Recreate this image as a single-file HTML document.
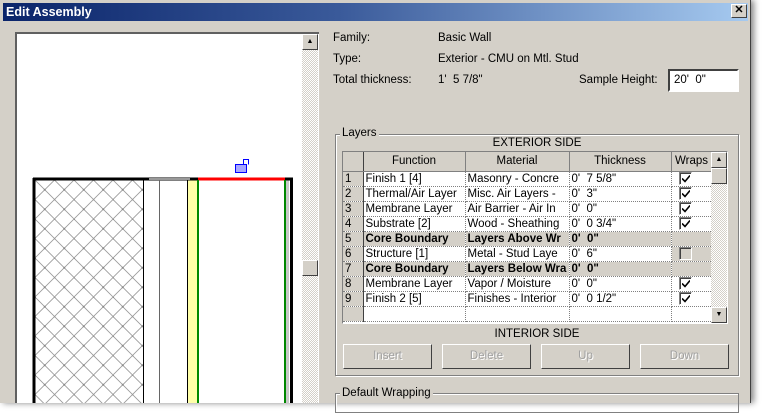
<!DOCTYPE html>
<html><head><style>
*{margin:0;padding:0;box-sizing:border-box}
body{width:768px;height:403px;overflow:hidden;background:#fff;font-family:"Liberation Sans",sans-serif;font-size:11.5px;color:#000;position:relative}
.abs{position:absolute}
.win{left:0;top:0;width:751px;height:403px;background:#d4d0c8;border-right:1px solid #404040;box-shadow:3px 0 6px #888}
.title{left:3px;top:3px;width:745px;height:18px;background:linear-gradient(90deg,#0a246a,#3a5a9a 45%,#a6caf0);color:#fff;font-weight:bold;font-size:12.5px;padding:2px 3px}
.close{left:731px;top:4px;width:16px;height:14px;background:#d4d0c8;border:1px solid;border-color:#fff #404040 #404040 #fff;font-size:11px;text-align:center;line-height:11px;color:#000;font-weight:bold}
.grid td{border-right:1px dotted #808080;border-bottom:1px dotted #808080;height:15px;padding:0 2px;white-space:nowrap;overflow:hidden;font-size:11.5px;line-height:14px}
.grid{border-collapse:collapse;table-layout:fixed}
.grid th{background:#d4d0c8;font-weight:normal;height:19px;border-right:1px solid #808080;border-bottom:1px solid #808080;font-size:11.5px}
.rn{background:#d4d0c8;border-right:1px solid #404040!important}
.gr td{background:#d4d0c8;font-weight:bold}
.cb{display:block;position:relative;width:13px;height:13px;border:1px solid;border-color:#808080 #fff #fff #808080;box-shadow:inset 1px 1px #404040;background:#fff;margin-left:5px}
.cb svg{position:absolute;left:2px;top:2px}
.btn{top:344px;width:89px;height:25px;border:1px solid;border-color:#fff #404040 #404040 #fff;color:#a0a0a0;text-align:center;line-height:23px;text-shadow:1px 1px #fff}
.sb{background:repeating-conic-gradient(#d4d0c8 0 25%,#fff 0 50%) 0 0/2px 2px}
.sbb{background:#d4d0c8;border:1px solid;border-color:#fff #404040 #404040 #fff;width:16px;height:16px;font-size:7px;text-align:center;line-height:14px}
</style></head><body>
<div class="abs win"></div>
<div class="abs title">Edit Assembly</div>
<div class="abs close">✕</div>
<div class="abs" style="left:15px;top:32px;width:304px;height:371px;background:#fff;border-top:2px solid #606060;border-left:2px solid #606060"></div>
<div class="abs sb" style="left:302px;top:34px;width:16px;height:369px"></div>
<div class="abs sbb" style="left:302px;top:34px">▲</div>
<div class="abs sbb" style="left:302px;top:260px"></div>
<svg class="abs" style="left:0;top:0" width="320" height="403">
<defs><pattern id="h" width="19.5" height="19.5" patternUnits="userSpaceOnUse" x="35" y="180"><path d="M0 0L19.5 19.5M19.5 0L0 19.5" stroke="#999" stroke-width="0.8" fill="none"/><circle cx="9.75" cy="9.75" r="1" fill="#888"/><circle cx="0" cy="0" r="1" fill="#888"/></pattern></defs>
<rect x="35" y="180" width="108" height="223" fill="url(#h)"/>
<rect x="187" y="180" width="10" height="223" fill="#ffffa8"/>
<rect x="284" y="180" width="5" height="223" fill="#c8c8c8"/>
<line x1="33" y1="179" x2="293" y2="179" stroke="#000" stroke-width="3"/>
<line x1="149" y1="179" x2="190" y2="179" stroke="#999" stroke-width="2"/>
<line x1="198" y1="179" x2="285" y2="179" stroke="#f00" stroke-width="3"/>
<line x1="34" y1="178" x2="34" y2="403" stroke="#000" stroke-width="3"/>
<line x1="143.5" y1="180" x2="143.5" y2="403" stroke="#000"/>
<line x1="159.5" y1="180" x2="159.5" y2="403" stroke="#666"/>
<line x1="187.5" y1="180" x2="187.5" y2="403" stroke="#000"/>
<line x1="198" y1="180" x2="198" y2="403" stroke="#080" stroke-width="2"/>
<line x1="285" y1="180" x2="285" y2="403" stroke="#080" stroke-width="2"/>
<line x1="291.5" y1="178" x2="291.5" y2="403" stroke="#000" stroke-width="3"/>
<rect x="235.5" y="164.5" width="11" height="8" fill="#a8a8ff" stroke="#00f"/>
<path d="M243.5 164.5v-5h5v5" fill="none" stroke="#00f"/>
</svg>
<div class="abs" style="left:333px;top:32px">Family:</div>
<div class="abs" style="left:438px;top:32px">Basic Wall</div>
<div class="abs" style="left:333px;top:53px">Type:</div>
<div class="abs" style="left:438px;top:53px">Exterior - CMU on Mtl. Stud</div>
<div class="abs" style="left:333px;top:74px">Total thickness:</div>
<div class="abs" style="left:438px;top:74px">1'&nbsp; 5 7/8"</div>
<div class="abs" style="left:579px;top:74px">Sample Height:</div>
<div class="abs" style="left:668px;top:69px;width:71px;height:23px;background:#fff;border:2px solid;border-color:#404040 #fff #fff #404040;padding:3px 4px">20'&nbsp; 0"</div>
<div class="abs" style="left:335px;top:134px;width:404px;height:242px;border:1px solid #808080;box-shadow:1px 1px #fff inset,1px 1px #fff"></div>
<div class="abs" style="left:340px;top:127px;background:#d4d0c8;padding:0 2px">Layers</div>
<div class="abs" style="left:335px;top:137px;width:404px;text-align:center">EXTERIOR SIDE</div>
<div class="abs" style="left:342px;top:151px;width:386px;height:173px;border:1px solid;border-color:#808080 #fff #fff #808080;background:#fff;overflow:hidden">
<table class="grid" style="width:369px">
<colgroup><col style="width:20px"><col style="width:102px"><col style="width:104px"><col style="width:102px"><col style="width:41px"></colgroup>
<tr><th style="border-right:1px solid #404040"></th><th>Function</th><th>Material</th><th>Thickness</th><th>Wraps</th></tr>
<tr><td class="rn">1</td><td>Finish 1 [4]</td><td>Masonry - Concre</td><td>0'&nbsp; 7 5/8"</td><td><span class="cb"><svg width="8" height="8"><path d="M0 3.5l3 3 5-6" stroke="#000" stroke-width="1.6" fill="none"/></svg></span></td></tr>
<tr><td class="rn">2</td><td>Thermal/Air Layer</td><td>Misc. Air Layers -</td><td>0'&nbsp; 3"</td><td><span class="cb"><svg width="8" height="8"><path d="M0 3.5l3 3 5-6" stroke="#000" stroke-width="1.6" fill="none"/></svg></span></td></tr>
<tr><td class="rn">3</td><td>Membrane Layer</td><td>Air Barrier - Air In</td><td>0'&nbsp; 0"</td><td><span class="cb"><svg width="8" height="8"><path d="M0 3.5l3 3 5-6" stroke="#000" stroke-width="1.6" fill="none"/></svg></span></td></tr>
<tr><td class="rn">4</td><td>Substrate [2]</td><td>Wood - Sheathing</td><td>0'&nbsp; 0 3/4"</td><td><span class="cb"><svg width="8" height="8"><path d="M0 3.5l3 3 5-6" stroke="#000" stroke-width="1.6" fill="none"/></svg></span></td></tr>
<tr class="gr"><td class="rn" style="font-weight:normal">5</td><td>Core Boundary</td><td>Layers Above Wr</td><td>0'&nbsp; 0"</td><td></td></tr>
<tr><td class="rn">6</td><td>Structure [1]</td><td>Metal - Stud Laye</td><td>0'&nbsp; 6"</td><td style="background:#d4d0c8"><span class="cb" style="background:#d4d0c8"></span></td></tr>
<tr class="gr"><td class="rn" style="font-weight:normal">7</td><td>Core Boundary</td><td>Layers Below Wra</td><td>0'&nbsp; 0"</td><td></td></tr>
<tr><td class="rn">8</td><td>Membrane Layer</td><td>Vapor / Moisture</td><td>0'&nbsp; 0"</td><td><span class="cb"><svg width="8" height="8"><path d="M0 3.5l3 3 5-6" stroke="#000" stroke-width="1.6" fill="none"/></svg></span></td></tr>
<tr><td class="rn">9</td><td>Finish 2 [5]</td><td>Finishes - Interior</td><td>0'&nbsp; 0 1/2"</td><td><span class="cb"><svg width="8" height="8"><path d="M0 3.5l3 3 5-6" stroke="#000" stroke-width="1.6" fill="none"/></svg></span></td></tr>
<tr><td class="rn"></td><td></td><td></td><td></td><td></td></tr>
</table>
<div class="abs sb" style="left:368px;top:0;width:17px;height:171px"></div>
<div class="abs sbb" style="left:368px;top:0">▲</div>
<div class="abs sbb" style="left:368px;top:16px"></div>
<div class="abs sbb" style="left:368px;top:155px">▼</div>
</div>
<div class="abs" style="left:335px;top:328px;width:404px;text-align:center">INTERIOR SIDE</div>
<div class="abs btn" style="left:343px">Insert</div>
<div class="abs btn" style="left:442px">Delete</div>
<div class="abs btn" style="left:541px">Up</div>
<div class="abs btn" style="left:640px">Down</div>
<div class="abs" style="left:335px;top:393px;width:404px;height:20px;border:1px solid #808080;box-shadow:1px 1px #fff inset"></div>
<div class="abs" style="left:340px;top:387px;background:#d4d0c8;padding:0 2px">Default Wrapping</div>
</body></html>
